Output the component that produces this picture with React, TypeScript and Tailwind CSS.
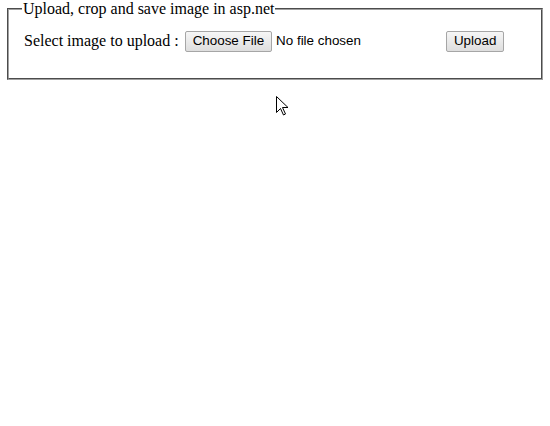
import React from 'react'

function Cursor() {
  return (
    <svg className="absolute left-[276px] top-[96px]" width="13" height="20" viewBox="0 0 13 20">
      <path d="M0.5 0.5 L0.5 16.5 L4.5 12.5 L7.5 19 L9.5 18 L6.5 11.5 L12 11.5 Z" fill="#fff" stroke="#000" strokeWidth="1" />
    </svg>
  )
}

function WinButton({ children, className = '' }: { children: React.ReactNode; className?: string }) {
  return (
    <span
      className={`inline-flex h-[21px] items-center rounded-[2px] border border-[#a6a6a6] bg-gradient-to-b from-[#f6f6f6] to-[#dedede] px-[7px] text-[13.4px] text-black ${className}`}
      style={{ fontFamily: '"Liberation Sans", Arial, sans-serif' }}
    >
      {children}
    </span>
  )
}

export default function App() {
  return (
    <div className="relative h-[426px] w-[550px] bg-white" style={{ fontFamily: '"Liberation Serif", "Times New Roman", serif' }}>
      <fieldset className="ml-[7px] w-[536px] border-2 border-[#a0a0a0] pt-[11px] pb-[25px]" style={{ borderStyle: 'groove' }}>
        <legend className="ml-[13px] px-[1px] text-[16px] leading-[18px] text-black">Upload, crop and save image in asp.net</legend>
        <div className="flex items-center pl-[15px] text-[16px] text-black">
          <span>Select image to upload :</span>
          <WinButton className="ml-[6px]">Choose File</WinButton>
          <span className="ml-[4px] text-[13.4px]" style={{ fontFamily: '"Liberation Sans", Arial, sans-serif' }}>
            No file chosen
          </span>
          <WinButton className="ml-[85px]">Upload</WinButton>
        </div>
      </fieldset>
      <Cursor />
    </div>
  )
}
